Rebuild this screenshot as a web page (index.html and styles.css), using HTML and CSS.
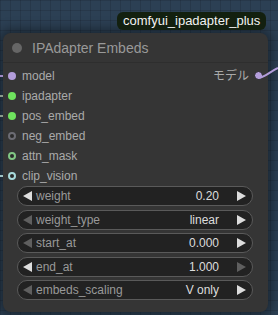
FILE: index.html
```html
<!DOCTYPE html>
<html lang="en">
<head>
    <title>IPAdapter Embeds</title>
    <link rel="stylesheet" href="styles.css">
</head>
<body>
    <div class="badge">comfyui_ipadapter_plus</div>
    <div class="node">
        <div class="title">
            <span class="title-dot"></span>
            <span class="title-text">IPAdapter Embeds</span>
        </div>
        <div class="slots">
            <div class="inputs">
                <div class="slot"><span class="stub model"></span><span class="dot model"></span>model</div>
                <div class="slot"><span class="stub ipa"></span><span class="dot ipa"></span>ipadapter</div>
                <div class="slot"><span class="stub ipa"></span><span class="dot ipa"></span>pos_embed</div>
                <div class="slot"><span class="dot ring neg"></span>neg_embed</div>
                <div class="slot"><span class="dot ring mask"></span>attn_mask</div>
                <div class="slot"><span class="stub clip"></span><span class="dot ring clip"></span>clip_vision</div>
            </div>
            <div class="outputs">
                <div class="slot out">モデル<span class="dot model out-dot"></span>
                    <svg class="wire" width="20" height="16" viewBox="0 0 20 16"><path d="M0 13 C6 13 10 8 20 3" stroke="#b39ddb" stroke-width="2" fill="none"/></svg>
                </div>
            </div>
        </div>
        <div class="widgets">
            <div class="widget"><span class="arrow left"></span><span class="label">weight</span><span class="value">0.20</span><span class="arrow right"></span></div>
            <div class="widget"><span class="arrow left off"></span><span class="label">weight_type</span><span class="value">linear</span><span class="arrow right"></span></div>
            <div class="widget"><span class="arrow left off"></span><span class="label">start_at</span><span class="value">0.000</span><span class="arrow right"></span></div>
            <div class="widget"><span class="arrow left"></span><span class="label">end_at</span><span class="value">1.000</span><span class="arrow right off"></span></div>
            <div class="widget"><span class="arrow left off"></span><span class="label">embeds_scaling</span><span class="value">V only</span><span class="arrow right"></span></div>
        </div>
    </div>
</body>
</html>
```

FILE: styles.css
```css
*{
    margin: 0;
    padding: 0;
    box-sizing: border-box;
}
body{
    width: 278px;
    height: 315px;
    overflow: hidden;
    font-family: "Liberation Sans", Arial, "Noto Sans CJK JP", sans-serif;
    background-color: #2c4054;
    background-image:
        linear-gradient(rgba(0,0,0,0.12) 1px, transparent 1px),
        linear-gradient(90deg, rgba(0,0,0,0.12) 1px, transparent 1px);
    background-size: 10px 10px;
    padding: 33px 10px 0 3px;
    position: relative;
}
.badge{
    position: absolute;
    left: 117px;
    top: 12px;
    height: 18px;
    padding: 0 6px;
    border-radius: 6px;
    background-color: #13200f;
    color: #f2f2f2;
    font-size: 13px;
    line-height: 18px;
    z-index: 2;
}
.node{
    width: 265px;
    height: 279px;
    background-color: #353535;
    border-radius: 8px;
    box-shadow: 0 0 12px 4px rgba(0,0,0,0.4);
    position: relative;
}
.title{
    height: 30px;
    display: flex;
    align-items: center;
    border-bottom: 1px solid #2e2e2e;
}
.title-dot{
    width: 10px;
    height: 10px;
    border-radius: 50%;
    background-color: #666;
    margin-left: 9px;
    margin-right: 10px;
}
.title-text{
    color: #999;
    font-size: 14px;
}
.slots{
    display: flex;
    justify-content: space-between;
    padding-top: 3px;
}
.slot{
    height: 20px;
    display: flex;
    align-items: center;
    color: #aaa;
    font-size: 12px;
    position: relative;
}
.inputs .slot{
    padding-left: 19px;
}
.dot{
    position: absolute;
    left: 5px;
    top: 6px;
    width: 8px;
    height: 8px;
    border-radius: 50%;
}
.dot.model{ background-color: #b39ddb; }
.dot.ipa{ background-color: #6fe35e; }
.dot.ring{
    background-color: #2a2a2a;
    border: 2px solid #777;
}
.dot.ring.neg{ border-color: #6c6c74; }
.dot.ring.mask{ border-color: #81c784; }
.dot.ring.clip{ border-color: #a8dadc; }
.stub{
    position: absolute;
    left: -3px;
    top: 9px;
    width: 3px;
    height: 2px;
}
.stub.model{ background-color: #9f8ac4; }
.stub.ipa{ background-color: #8a9a8a; }
.stub.clip{ background-color: #9fc2c4; }
.out{
    padding-right: 19px;
    line-height: 20px;
}
.out-dot{
    left: auto;
    right: 5px;
    top: 5px;
    width: 9px;
    height: 9px;
    border: 1px solid #222;
}
.wire{
    position: absolute;
    right: -10px;
    top: -1px;
}
.widgets{
    display: flex;
    flex-direction: column;
    gap: 3.5px;
    padding: 0 15px 0 14px;
}
.widget{
    height: 20px;
    display: flex;
    align-items: center;
    background-color: #222;
    border: 1px solid #5a5a5a;
    border-radius: 10px;
    font-size: 12px;
    padding: 0 6px 0 5px;
}
.label{
    color: #999;
    margin-left: 4px;
    flex: 1;
}
.value{
    color: #ddd;
    margin-right: 18px;
}
.arrow{
    width: 0;
    height: 0;
    border-top: 5px solid transparent;
    border-bottom: 5px solid transparent;
}
.arrow.left{ border-right: 9px solid #ddd; }
.arrow.right{ border-left: 9px solid #ddd; }
.arrow.left.off{ border-right-color: #5f5f5f; }
.arrow.right.off{ border-left-color: #5f5f5f; }
```
